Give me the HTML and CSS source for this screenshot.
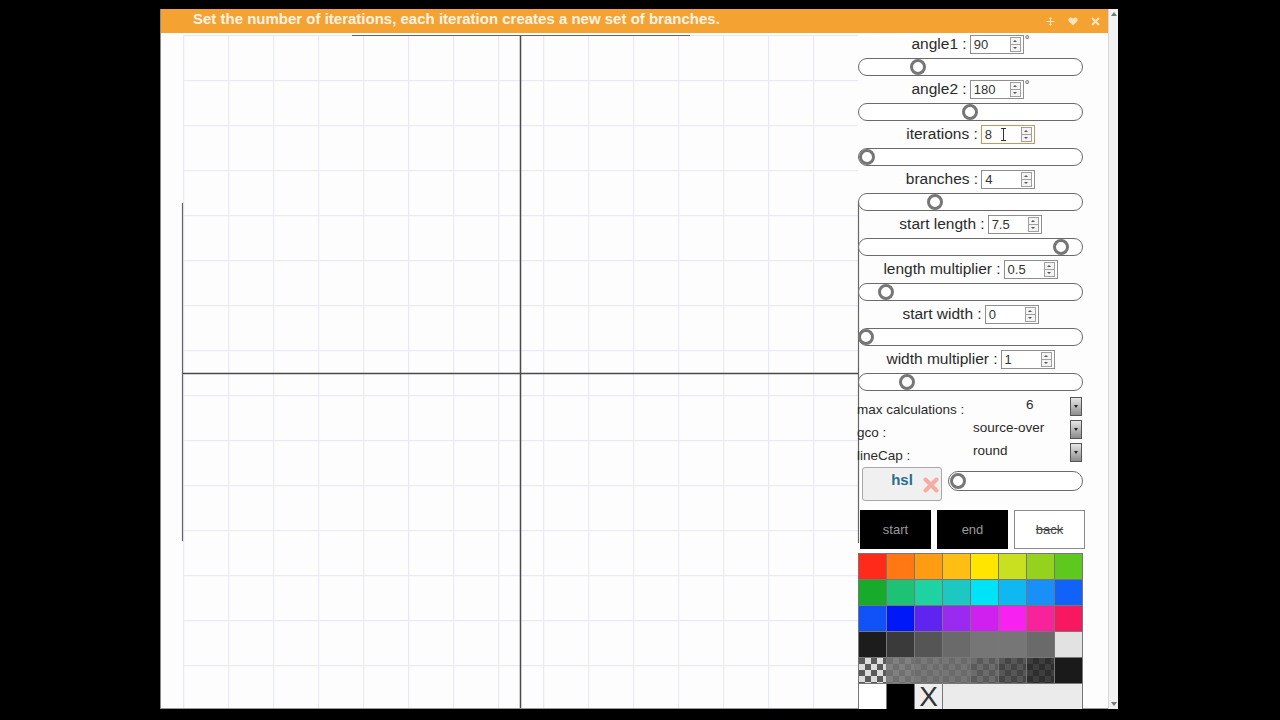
FILE: index.html
```html
<!DOCTYPE html>
<html lang="en">
<head>
    <meta charset="UTF-8">
    <title>Fractal Tree</title>
    <link rel="stylesheet" href="styles.css">
</head>
<body>

<div class="window">
    <div class="main">

        <!-- Hint bar -->
        <div class="titlebar">
            <span class="hint">Set the number of iterations, each iteration creates a new set of branches.</span>
            <div class="tools">
                <svg width="9" height="9" viewBox="0 0 9 9"><path d="M4.5 0.5v8M0.5 4.5h8" stroke="#fde3bd" stroke-width="1.2"/><path d="M3 2l1.5-1.5L6 2M3 7l1.5 1.5L6 7" fill="none" stroke="#fde3bd" stroke-width="0.8"/></svg>
                <svg width="10" height="9" viewBox="0 0 10 9"><path d="M5 8.5L1 4.6C-0.2 3.3 0.3 0.8 2.4 0.6 3.6 0.5 4.4 1.2 5 2 5.6 1.2 6.4 0.5 7.6 0.6 9.7 0.8 10.2 3.3 9 4.6Z" fill="#fde3bd"/></svg>
                <svg width="9" height="9" viewBox="0 0 9 9"><path d="M1 1l7 7M8 1L1 8" stroke="#fde3bd" stroke-width="2.2"/></svg>
            </div>
        </div>

        <div class="content">

            <!-- Drawing canvas -->
            <div class="stage">
                <svg class="drawing" width="697" height="675">
                    <defs>
                        <pattern id="grid" x="22" y="2" width="45" height="45" patternUnits="userSpaceOnUse">
                            <path d="M0.5 0V45M0 0.5H45" stroke="#eaeaf6" stroke-width="1.5" fill="none"/>
                        </pattern>
                    </defs>
                    <rect x="22" y="2" width="675" height="673" fill="url(#grid)"/>
                    <path d="M359.5 2V675M22 340.5H697" stroke="#4a4a4a" stroke-width="1.5"/>
                    <path d="M191 2.5H529M21.5 170V508M697.5 168V510" stroke="#666" stroke-width="1.2"/>
                </svg>
            </div>

            <!-- Settings -->
            <div class="panel">
                <div class="field">
                    <div class="field-head"><span class="field-label">angle1 :</span><span class="spin"><span>90</span><i class="spin-btns"></i></span><sup class="deg">°</sup></div>
                    <div class="track"><span class="knob" style="left:51px"></span></div>
                </div>
                <div class="field">
                    <div class="field-head"><span class="field-label">angle2 :</span><span class="spin"><span>180</span><i class="spin-btns"></i></span><sup class="deg">°</sup></div>
                    <div class="track"><span class="knob" style="left:103px"></span></div>
                </div>
                <div class="field">
                    <div class="field-head"><span class="field-label">iterations :</span><span class="spin focused"><span>8</span><svg class="ibeam" width="7" height="13" viewBox="0 0 7 13"><path d="M1 0.5h5M1 12.5h5M3.5 0.5v12" stroke="#333" fill="none"/></svg><i class="spin-btns"></i></span></div>
                    <div class="track"><span class="knob" style="left:0px"></span></div>
                </div>
                <div class="field">
                    <div class="field-head"><span class="field-label">branches :</span><span class="spin"><span>4</span><i class="spin-btns"></i></span></div>
                    <div class="track"><span class="knob" style="left:68px"></span></div>
                </div>
                <div class="field">
                    <div class="field-head"><span class="field-label">start length :</span><span class="spin"><span>7.5</span><i class="spin-btns"></i></span></div>
                    <div class="track"><span class="knob" style="left:194px"></span></div>
                </div>
                <div class="field">
                    <div class="field-head"><span class="field-label">length multiplier :</span><span class="spin"><span>0.5</span><i class="spin-btns"></i></span></div>
                    <div class="track"><span class="knob" style="left:19px"></span></div>
                </div>
                <div class="field">
                    <div class="field-head"><span class="field-label">start width :</span><span class="spin"><span>0</span><i class="spin-btns"></i></span></div>
                    <div class="track"><span class="knob" style="left:-1px"></span></div>
                </div>
                <div class="field">
                    <div class="field-head"><span class="field-label">width multiplier :</span><span class="spin"><span>1</span><i class="spin-btns"></i></span></div>
                    <div class="track"><span class="knob" style="left:40px"></span></div>
                </div>

                <div class="opt">
                    <span class="opt-label">max calculations :</span>
                    <span class="opt-value num">6</span>
                    <span class="drop"></span>
                </div>
                <div class="opt">
                    <span class="opt-label">gco :</span>
                    <span class="opt-value">source-over</span>
                    <span class="drop"></span>
                </div>
                <div class="opt">
                    <span class="opt-label">lineCap :</span>
                    <span class="opt-value">round</span>
                    <span class="drop"></span>
                </div>

                <div class="hsl-row">
                    <div class="hsl-btn">hsl
                        <svg class="hsl-off" width="16" height="16" viewBox="0 0 16 16"><path d="M2.5 2.5l11 11M13.5 2.5l-11 11" stroke="#f6aba3" stroke-width="4" stroke-linecap="round"/></svg>
                    </div>
                    <div class="track short"><span class="knob" style="left:1px"></span></div>
                </div>

                <div class="actions">
                    <button class="btn dark">start</button>
                    <button class="btn dark">end</button>
                    <button class="btn light">back</button>
                </div>

                <div class="palette">
                    <span style="background:#ff2a1a"></span>
                    <span style="background:#ff7812"></span>
                    <span style="background:#ff9c12"></span>
                    <span style="background:#ffbe14"></span>
                    <span style="background:#ffe600"></span>
                    <span style="background:#c8e020"></span>
                    <span style="background:#94d21e"></span>
                    <span style="background:#5ec81e"></span>

                    <span style="background:#18aa2a"></span>
                    <span style="background:#1ec274"></span>
                    <span style="background:#1ed2a2"></span>
                    <span style="background:#1ec8c2"></span>
                    <span style="background:#00e2f8"></span>
                    <span style="background:#10b8f2"></span>
                    <span style="background:#1890f8"></span>
                    <span style="background:#1062f8"></span>

                    <span style="background:#1052f8"></span>
                    <span style="background:#0018f8"></span>
                    <span style="background:#6024f0"></span>
                    <span style="background:#9a2af0"></span>
                    <span style="background:#d020f0"></span>
                    <span style="background:#f822f0"></span>
                    <span style="background:#f8229a"></span>
                    <span style="background:#f81862"></span>

                    <span style="background:#1c1c1c"></span>
                    <span style="background:#3a3a3a"></span>
                    <span style="background:#555555"></span>
                    <span style="background:#6a6a6a"></span>
                    <span style="background:#767676"></span>
                    <span style="background:#767676"></span>
                    <span style="background:#6a6a6a"></span>
                    <span style="background:#e2e2e2"></span>

                    <span class="checker c1"></span>
                    <span class="checker c2"></span>
                    <span class="checker c3"></span>
                    <span class="checker c4"></span>
                    <span class="checker c5"></span>
                    <span class="checker c6"></span>
                    <span class="checker c7"></span>
                    <span style="background:#1a1a1a"></span>

                    <span style="background:#ffffff"></span>
                    <span style="background:#000000"></span>
                    <span class="clear">X</span>
                    <span class="empty"></span>
                </div>
            </div>

        </div>
    </div>

    <div class="scrollbar">
        <i class="arrow up"></i>
        <i class="arrow down"></i>
    </div>
</div>

</body>
</html>
```

FILE: styles.css
```css
body {
    margin: 0;
    background-color: #000;
    font-family: "Liberation Sans", Arial, sans-serif;
    color: #333;
}
.window {
    display: flex;
    width: 958px;
    height: 700px;
    margin: 9px 0 0 160px;
    background-color: #fdfdfe;
}
.main {
    flex: 1;
    display: flex;
    flex-direction: column;
    border-left: 1px solid #8a8a8a;
    border-bottom: 1px solid #9a9a9a;
    min-width: 0;
}

/* hint bar */
.titlebar {
    height: 24px;
    box-sizing: border-box;
    display: flex;
    align-items: center;
    padding: 0 8px 6px 32px;
    background-color: #f4a232;
}
.hint {
    flex: 1;
    color: #fdf3e4;
    font-size: 15px;
    font-weight: bold;
}
.tools {
    display: flex;
    align-items: center;
    gap: 13px;
    padding-top: 6px;
}

.content {
    flex: 1;
    display: flex;
    min-height: 0;
}
.stage {
    width: 697px;
    flex: none;
}
.drawing {
    display: block;
    overflow: visible;
}

/* settings panel */
.panel {
    width: 225px;
    flex: none;
    padding-top: 2px;
    display: flex;
    flex-direction: column;
}
.panel > * {
    flex: none;
}
.field {
    height: 45px;
}
.field-head {
    height: 18px;
    margin-bottom: 5px;
    display: flex;
    align-items: center;
    justify-content: center;
    gap: 3px;
}
.field-label {
    font-size: 15.5px;
    color: #2a2a2a;
}
.spin {
    width: 54px;
    height: 19px;
    box-sizing: border-box;
    border: 1px solid #8f8f8f;
    background-color: #fff;
    display: flex;
    align-items: center;
    padding-left: 3px;
    font-size: 13px;
    color: #333;
}
.spin span {
    flex: 1;
}
.spin.focused {
    border-color: #c8975a;
}
.ibeam {
    margin-right: 14px;
}
.spin-btns {
    width: 11px;
    height: 15px;
    margin-right: 2px;
    box-sizing: border-box;
    border: 1px solid #a0a0a0;
    background:
        linear-gradient(#a0a0a0, #a0a0a0) 0 50% / 100% 1px no-repeat,
        #f4f4f4;
    position: relative;
}
.spin-btns::before,
.spin-btns::after {
    content: "";
    position: absolute;
    left: 2px;
    border-left: 2.5px solid transparent;
    border-right: 2.5px solid transparent;
}
.spin-btns::before {
    top: 2px;
    border-bottom: 2.5px solid #555;
}
.spin-btns::after {
    bottom: 2px;
    border-top: 2.5px solid #555;
}
.deg {
    align-self: flex-start;
    font-size: 12px;
    line-height: 10px;
    margin-left: -2px;
}
.track {
    height: 18px;
    box-sizing: border-box;
    border: 1px solid #6a6a6a;
    border-radius: 9px;
    background-color: #fff;
    position: relative;
}
.knob {
    position: absolute;
    top: 0;
    width: 16px;
    height: 16px;
    box-sizing: border-box;
    border: 3px solid #767676;
    border-radius: 50%;
    background-color: #fff;
}

/* select rows */
.opt {
    height: 23px;
    display: flex;
    align-items: center;
    font-size: 13.5px;
    color: #2a2a2a;
}
.opt-label {
    width: 116px;
    padding-top: 5px;
    margin-left: -1px;
}
.opt-value {
    flex: 1;
    padding-bottom: 4px;
}
.opt-value.num {
    padding-left: 53px;
}
.drop {
    width: 12px;
    height: 19px;
    margin-right: 1px;
    box-sizing: border-box;
    border: 1px solid #555;
    background: linear-gradient(#e6e6e6, #8c8c8c);
    position: relative;
}
.drop::after {
    content: "";
    position: absolute;
    left: 3px;
    top: 7px;
    border-left: 2.5px solid transparent;
    border-right: 2.5px solid transparent;
    border-top: 3px solid #222;
}

/* hsl */
.hsl-row {
    height: 34px;
    margin-top: 3px;
    display: flex;
    align-items: flex-start;
    gap: 6px;
    padding-left: 4px;
}
.hsl-btn {
    width: 80px;
    height: 34px;
    box-sizing: border-box;
    border: 1px solid #a8a8a8;
    border-radius: 3px;
    background-color: #f0f0f0;
    color: #2b6c8c;
    font-size: 15px;
    font-weight: bold;
    text-align: center;
    line-height: 24px;
    position: relative;
}
.hsl-off {
    position: absolute;
    left: 60px;
    top: 9px;
}
.track.short {
    flex: 1;
    height: 20px;
    margin-top: 4px;
    border-radius: 10px;
}
.track.short .knob {
    top: 1px;
}

/* action buttons */
.actions {
    display: flex;
    gap: 6px;
    margin-top: 9px;
    padding-left: 2px;
}
.btn {
    width: 71px;
    height: 39px;
    flex: none;
    font-family: "Liberation Sans", Arial, sans-serif;
    font-size: 13px;
    border: none;
    padding: 0;
}
.btn.dark {
    background-color: #000;
    color: #9a9a9a;
}
.btn.light {
    background-color: #fff;
    border: 1px solid #8a8a8a;
    color: #444;
    text-decoration: line-through;
}

/* colour palette */
.palette {
    margin-top: 4px;
    display: grid;
    grid-template-columns: repeat(8, 27px);
    grid-auto-rows: 25px;
    gap: 1px;
    width: 223px;
    border: 1px solid #777;
    border-bottom: none;
    background-color: #777;
}
.checker {
    background-size: 12px 12px;
}
.c1 { background-image: conic-gradient(#dcdcdc 25%, #5a5a5a 0 50%, #dcdcdc 0 75%, #5a5a5a 0); }
.c2 { background-image: conic-gradient(#808080 25%, #707070 0 50%, #808080 0 75%, #707070 0); }
.c3 { background-image: conic-gradient(#787878 25%, #6c6c6c 0 50%, #787878 0 75%, #6c6c6c 0); }
.c4 { background-image: conic-gradient(#6a6a6a 25%, #767676 0 50%, #6a6a6a 0 75%, #767676 0); }
.c5 { background-image: conic-gradient(#5a5a5a 25%, #6c6c6c 0 50%, #5a5a5a 0 75%, #6c6c6c 0); }
.c6 { background-image: conic-gradient(#454545 25%, #575757 0 50%, #454545 0 75%, #575757 0); }
.c7 { background-image: conic-gradient(#2e2e2e 25%, #3e3e3e 0 50%, #2e2e2e 0 75%, #3e3e3e 0); }
.clear {
    background-color: #eeeeee;
    color: #333;
    font-size: 28px;
    line-height: 25px;
    text-align: center;
}
.empty {
    grid-column: span 5;
    background-color: #ebebeb;
}

/* scrollbar */
.scrollbar {
    width: 10px;
    flex: none;
    box-sizing: border-box;
    border-left: 1px solid #d8d8d8;
    background-color: #f2f2f2;
    display: flex;
    flex-direction: column;
    justify-content: space-between;
    align-items: center;
    padding: 3px 0;
}
.arrow {
    border-left: 3px solid transparent;
    border-right: 3px solid transparent;
}
.arrow.up {
    border-bottom: 4px solid #777;
}
.arrow.down {
    border-top: 4px solid #777;
}
```
